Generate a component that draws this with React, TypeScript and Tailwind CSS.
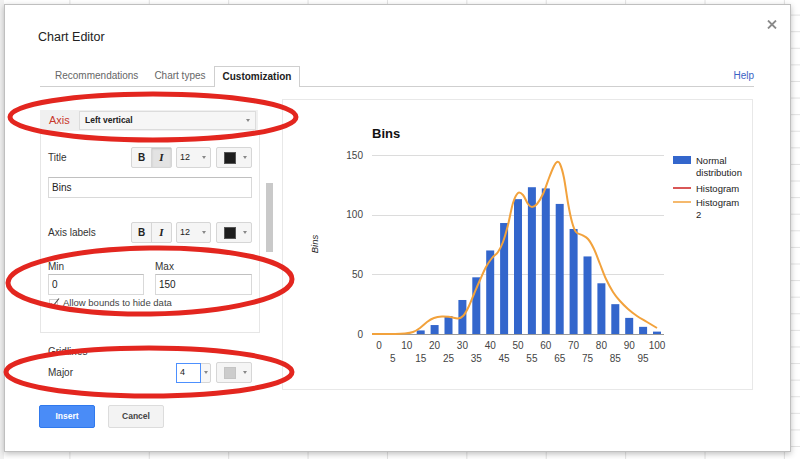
import React from 'react';

const FONT = "font-['Liberation_Sans',Arial,sans-serif]";

// bin heights read off the histogram, one per 5 units (0..100)
const BINS = [0, 0, 0, 3, 7.5, 15, 28.5, 47.5, 70, 93, 113, 123, 122, 109, 88, 65, 42.5, 25, 13.5, 6, 2];

// smoothed "Histogram 2" line, page coordinates
const CURVE: [number, number][] = [
  [372, 334], [395, 334], [405, 333.5], [413, 332], [420, 328], [427, 322], [434, 318],
  [442, 316.5], [450, 317], [458, 318.5], [463, 316], [468, 308], [474, 294], [480, 280],
  [486, 267], [492, 258], [498, 252], [503, 242], [508, 225], [513, 203], [518, 193],
  [523, 195], [528, 204], [532, 207], [537, 204], [543, 194], [549, 178], [554, 166],
  [557, 162], [560, 164], [564, 178], [568, 203], [572, 222], [576, 232], [582, 235],
  [588, 239], [594, 249], [600, 264], [606, 279], [613, 292], [620, 301], [628, 309],
  [637, 316], [647, 322], [657, 328],
];

const BASE = 334;
const yOf = (v: number) => BASE - (v * 179) / 150;
const xOf = (i: number) => 379 + i * 13.9;

function smoothPath(pts: [number, number][]) {
  let d = `M${pts[0][0]},${pts[0][1]}`;
  for (let i = 0; i < pts.length - 1; i++) {
    const p0 = pts[i - 1] || pts[i];
    const p1 = pts[i];
    const p2 = pts[i + 1];
    const p3 = pts[i + 2] || p2;
    const c1x = p1[0] + (p2[0] - p0[0]) / 6;
    const c1y = p1[1] + (p2[1] - p0[1]) / 6;
    const c2x = p2[0] - (p3[0] - p1[0]) / 6;
    const c2y = p2[1] - (p3[1] - p1[1]) / 6;
    d += ` C${c1x.toFixed(1)},${c1y.toFixed(1)} ${c2x.toFixed(1)},${c2y.toFixed(1)} ${p2[0]},${p2[1]}`;
  }
  return d;
}

function Caret() {
  return <span className="inline-block w-0 h-0 border-x-[2.5px] border-x-transparent border-t-[3px] border-t-[#888]" />;
}

function StyleControls({ italicOn }: { italicOn?: boolean }) {
  return (
    <div className="flex items-center">
      <div className="flex h-[21px] border border-[#d6d6d6] rounded-[2px] bg-[#f5f5f5]">
        <div className="w-[19px] flex items-center justify-center text-[10px] font-bold text-[#222]">B</div>
        <div
          className={`w-[20px] flex items-center justify-center border-l border-[#d6d6d6] font-['Liberation_Serif',serif] italic font-bold text-[11px] text-[#222] ${
            italicOn ? 'bg-[#e3e3e3] shadow-[inset_0_1px_2px_rgba(0,0,0,0.15)]' : ''
          }`}
        >
          I
        </div>
      </div>
      <div className="ml-[4px] w-[35px] h-[21px] border border-[#d6d6d6] rounded-[2px] bg-[#f5f5f5] flex items-center pl-[3px] pr-[4px] text-[9px] text-[#222]">
        <span>12</span>
        <span className="ml-auto flex"><Caret /></span>
      </div>
      <ColorBox swatch="bg-[#1d1d1d] border-[#555]" />
    </div>
  );
}

function ColorBox({ swatch }: { swatch: string }) {
  return (
    <div className="ml-[5px] w-[36px] h-[21px] border border-[#d6d6d6] rounded-[2px] bg-[#f5f5f5] flex items-center pl-[7px] pr-[4px]">
      <span className={`w-[12px] h-[12px] border ${swatch}`} />
      <span className="ml-auto flex"><Caret /></span>
    </div>
  );
}

function TextInput({ value, className = '' }: { value: string; className?: string }) {
  return (
    <div className={`h-[21px] border border-[#d9d9d9] border-t-[#c0c0c0] bg-white flex items-center pl-[3px] text-[10px] text-[#222] ${className}`}>
      {value}
    </div>
  );
}

function Chart() {
  const grid = [150, 100, 50];
  return (
    <svg width={469} height={289} viewBox="283 100 469 289" className="block">
      <text x={372} y={138} fontSize={13} fontWeight="bold" fill="#111" fontFamily="Liberation Sans, Arial, sans-serif">Bins</text>
      {grid.map((v) => (
        <g key={v}>
          <line x1={372} x2={664} y1={Math.round(yOf(v)) + 0.5} y2={Math.round(yOf(v)) + 0.5} stroke="#dcdcdc" />
          <text x={363} y={yOf(v) + 3.5} fontSize={10} textAnchor="end" fill="#444" fontFamily="Liberation Sans, Arial, sans-serif">{v}</text>
        </g>
      ))}
      <text x={363} y={BASE + 3.5} fontSize={10} textAnchor="end" fill="#444" fontFamily="Liberation Sans, Arial, sans-serif">0</text>
      <text
        x={0}
        y={0}
        transform="translate(318 244) rotate(-90)"
        fontSize={9.5}
        fontStyle="italic"
        textAnchor="middle"
        fill="#222"
        fontFamily="Liberation Sans, Arial, sans-serif"
      >
        Bins
      </text>
      {BINS.map((v, i) =>
        v > 0 ? <rect key={i} x={xOf(i) - 4} y={yOf(v)} width={8} height={BASE - yOf(v)} fill="#3366cc" /> : null
      )}
      <line x1={372} x2={664} y1={BASE + 0.5} y2={BASE + 0.5} stroke="#9a9a9a" />
      <path d={smoothPath(CURVE)} fill="none" stroke="#f2a23c" strokeWidth={2} strokeLinejoin="round" />
      {BINS.map((_, i) => (
        <text
          key={i}
          x={xOf(i)}
          y={i % 2 === 0 ? 349 : 362}
          fontSize={10}
          textAnchor="middle"
          fill="#444"
          fontFamily="Liberation Sans, Arial, sans-serif"
        >
          {i * 5}
        </text>
      ))}
      <g fontSize={9.5} fill="#222" fontFamily="Liberation Sans, Arial, sans-serif">
        <rect x={673} y={156} width={18} height={8} fill="#3366cc" />
        <text x={696} y={164}>Normal</text>
        <text x={696} y={176}>distribution</text>
        <line x1={673} x2={691} y1={188} y2={188} stroke="#cc1f1f" strokeWidth={1.5} />
        <text x={696} y={192}>Histogram</text>
        <line x1={673} x2={691} y1={202} y2={202} stroke="#f2a23c" strokeWidth={1.5} />
        <text x={696} y={206}>Histogram</text>
        <text x={696} y={218}>2</text>
      </g>
    </svg>
  );
}

export default function App() {
  return (
    <div
      className={`relative w-[800px] h-[459px] overflow-hidden bg-white ${FONT} bg-[linear-gradient(to_right,#e2e2e2_1px,transparent_1px),linear-gradient(to_bottom,#e2e2e2_1px,transparent_1px)] bg-size-[79.4px_16.6px] bg-position-[-10px_-2px]`}
    >
      <div className="absolute left-0 top-0 w-[4px] h-full bg-[#f1f1f1]" />

      {/* Dialog */}
      <div className="relative mt-[4px] ml-[4px] w-[787px] h-[448px] bg-white border border-[#bfbfbf] shadow-[0_2px_6px_rgba(0,0,0,0.25)] px-[33px] flex flex-col">
        <button className="absolute right-[13px] top-[14px] w-[11px] h-[10px] flex items-center justify-center">
          <svg width="10" height="9" viewBox="0 0 10 9">
            <path d="M1 0.5 L9 8.5 M9 0.5 L1 8.5" stroke="#8a8a8a" strokeWidth="1.8" />
          </svg>
        </button>

        <div className="pt-[25px] text-[12.5px] leading-[14px] text-[#222]">Chart Editor</div>

        {/* Tabs */}
        <div className="mt-[22px] ml-[2px] mr-[3px] h-[21px] flex items-end border-b border-[#cfcfcf] text-[10px]">
          <div className="ml-[7px] px-2 h-[20px] leading-[20px] text-[#666]">Recommendations</div>
          <div className="px-2 h-[20px] leading-[20px] text-[#666]">Chart types</div>
          <div className="px-[8px] h-[21px] leading-[20px] -mb-px border border-b-0 border-[#cfcfcf] bg-white font-bold text-[#222]">
            Customization
          </div>
          <div className="ml-auto h-[20px] leading-[20px] text-[#3b62c4]">Help</div>
        </div>

        {/* Body */}
        <div className="mt-[12px] ml-[2px] flex">
          <div className="w-[240px] pt-[11px] text-[10px] text-[#333]">
            <div className="w-[218px] h-[21px] bg-[#f0f0f0] flex items-center pl-[9px]">
              <span className="w-[30px] text-[11px] text-[#c8382c]">Axis</span>
              <div className="ml-auto mr-[2px] w-[177px] h-[19px] border border-[#dcdcdc] bg-[#f6f6f6] flex items-center pl-[5px] pr-[5px] text-[8.5px] font-bold text-[#222]">
                <span>Left vertical</span>
                <span className="ml-auto flex"><Caret /></span>
              </div>
            </div>

            <div className="flex">
              <div className="w-[220px] h-[202px] border-x border-b border-[#e6e6e6] px-[7px]">
                <div className="mt-[16px] h-[21px] flex items-center">
                  <span className="flex-1">Title</span>
                  <StyleControls italicOn />
                </div>
                <TextInput value="Bins" className="mt-[9px]" />
                <div className="mt-[24px] h-[21px] flex items-center">
                  <span className="flex-1">Axis labels</span>
                  <StyleControls />
                </div>
                <div className="mt-[18px] flex h-[12px] leading-[12px]">
                  <span className="w-[107px]">Min</span>
                  <span>Max</span>
                </div>
                <div className="mt-[1px] flex">
                  <TextInput value="0" className="w-[96px]" />
                  <TextInput value="150" className="ml-[11px] w-[97px]" />
                </div>
                <div className="mt-[3px] h-[10px] flex items-center text-[9.5px] text-[#444]">
                  <svg width="11" height="10" viewBox="0 0 11 10" className="ml-[1px]">
                    <rect x="0.5" y="1.5" width="8" height="8" fill="none" stroke="#d0d0d0" />
                    <path d="M2 5.5 L4 8 L10 0.5" fill="none" stroke="#555" strokeWidth="1.2" />
                  </svg>
                  <span className="ml-[3px]">Allow bounds to hide data</span>
                </div>
              </div>
              <div className="ml-[6px] mt-[52px] w-[7px] h-[69px] bg-[#c9c9c9]" />
            </div>

            <div className="w-[220px] px-[8px]">
              <div className="mt-[13px] h-[12px] leading-[12px]">Gridlines</div>
              <div className="mt-[4px] h-[21px] flex items-center">
                <span className="flex-1">Major</span>
                <div className="w-[35px] h-[20px] flex items-center border border-[#d6d6d6] rounded-[2px] bg-[#f7f7f7]">
                  <div className="w-[25px] h-[20px] -ml-px border border-[#4d90fe] bg-white flex items-center pl-[3px] text-[9px] text-[#222]">
                    4
                  </div>
                  <span className="ml-[3px] flex"><Caret /></span>
                </div>
                <ColorBox swatch="bg-[#cccccc] border-[#c4c4c4]" />
              </div>
            </div>
          </div>

          <div className="w-[471px] h-[291px] ml-[2px] border border-[#e8e8e8]">
            <Chart />
          </div>
        </div>

        {/* Actions */}
        <div className="mt-[15px] ml-[1px] flex">
          <button className="w-[56px] h-[23px] rounded-[2px] border border-[#3079ed] bg-[#4a8cf7] text-white text-[8.5px] font-bold">
            Insert
          </button>
          <button className="ml-[13px] w-[56px] h-[23px] rounded-[2px] border border-[#dcdcdc] bg-[#f3f3f3] text-[#444] text-[8.5px] font-bold">
            Cancel
          </button>
        </div>
      </div>

      {/* Red annotation rings drawn over the screenshot */}
      <svg className="absolute inset-0 pointer-events-none" width={800} height={459} viewBox="0 0 800 459">
        <g fill="none" stroke="#e3261f" strokeWidth={5}>
          <ellipse cx={153} cy={117} rx={143} ry={23} />
          <ellipse cx={150} cy={281} rx={142} ry={33} transform="rotate(-0.8 150 281)" />
          <ellipse cx={149} cy={372} rx={143} ry={24} />
        </g>
      </svg>
    </div>
  );
}
